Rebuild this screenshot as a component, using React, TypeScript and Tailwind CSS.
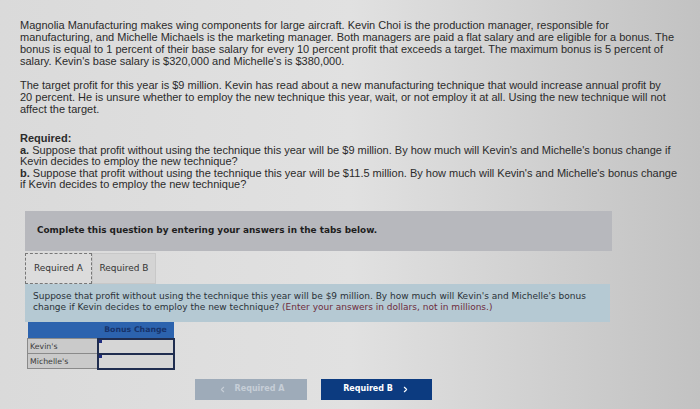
import { ChevronLeft, ChevronRight } from 'lucide-react'

const rows = ["Kevin's", "Michelle's"]

const intro = [
  'Magnolia Manufacturing makes wing components for large aircraft. Kevin Choi is the production manager, responsible for',
  'manufacturing, and Michelle Michaels is the marketing manager. Both managers are paid a flat salary and are eligible for a bonus. The',
  'bonus is equal to 1 percent of their base salary for every 10 percent profit that exceeds a target. The maximum bonus is 5 percent of',
  "salary. Kevin's base salary is $320,000 and Michelle's is $380,000.",
]

const target = [
  'The target profit for this year is $9 million. Kevin has read about a new manufacturing technique that would increase annual profit by',
  '20 percent. He is unsure whether to employ the new technique this year, wait, or not employ it at all. Using the new technique will not',
  'affect the target.',
]

export default function App() {
  return (
    <div className="h-[409px] w-[700px] overflow-hidden bg-linear-to-r from-[#dadada] via-[#e1e1e1] to-[#c2c2c2] text-[#2b2b2b]">
      {/* Question text */}
      <div className="pl-[20px] pt-[19px] font-['Liberation_Sans',Arial,sans-serif] text-[11px] leading-[12px] whitespace-nowrap">
        <div>
          {intro.map(l => <div key={l}>{l}</div>)}
        </div>
        <div className="mt-[12px]">
          {target.map(l => <div key={l}>{l}</div>)}
        </div>
        <div className="mt-[18px] leading-[11.6px]">
          <div className="font-bold">Required:</div>
          <div>
            <span className="font-bold">a.</span> Suppose that profit without using the technique this year will be $9 million. By how much will Kevin's and Michelle's bonus change if
          </div>
          <div>Kevin decides to employ the new technique?</div>
          <div>
            <span className="font-bold">b.</span> Suppose that profit without using the technique this year will be $11.5 million. By how much will Kevin's and Michelle's bonus change
          </div>
          <div>if Kevin decides to employ the new technique?</div>
        </div>
      </div>

      {/* Answer area */}
      <div className="ml-[25px] mt-[20px] w-[587px] font-['DejaVu_Sans',Verdana,sans-serif]">
        <div className="flex h-[40px] items-center bg-[#b7b8bd] pl-[12px] text-[8.9px] font-bold text-[#1e1e1e]">
          Complete this question by entering your answers in the tabs below.
        </div>

        <div className="flex h-[33px] pt-[2px]">
          <div className="flex w-[67px] items-center justify-center border border-dashed border-[#777] bg-[#dcdcdc] text-[9px] text-[#333]">
            Required A
          </div>
          <div className="flex w-[64px] items-center justify-center border border-[#c8c8c8] bg-[#d4d4d4] text-[9px] text-[#333]">
            Required B
          </div>
        </div>

        <div className="h-[38px] w-[585px] whitespace-nowrap bg-[#b5c9d3] px-[8px] pt-[7px] text-[9px] leading-[11px] text-[#2a3138]">
          <div>Suppose that profit without using the technique this year will be $9 million. By how much will Kevin's and Michelle's bonus</div>
          <div>
            change if Kevin decides to employ the new technique? <span className="text-[#6e2c3c]">(Enter your answers in dollars, not in millions.)</span>
          </div>
        </div>

        <table className="ml-[2px] border-collapse text-[7.8px]">
          <thead>
            <tr className="h-[17px] bg-[#2c63ae]">
              <th className="w-[70px]" />
              <th className="w-[76px] text-center font-bold text-[#17336b]">Bonus Change</th>
            </tr>
          </thead>
          <tbody>
            {rows.map(r => (
              <tr key={r} className="h-[15px]">
                <td className="border border-[#8a8a8a] bg-[#cacaca] pl-[2px] text-[#3a3a3a]">{r}</td>
                <td className="relative border-2 border-[#1f2d4f] bg-[#d6d6d6]">
                  <span className="absolute left-0 top-0 h-0 w-0 border-l-[3px] border-t-[3px] border-l-[#1f2d80] border-t-[#1f2d80] border-r-transparent border-b-transparent" />
                </td>
              </tr>
            ))}
          </tbody>
        </table>

        <div className="mt-[9px] flex gap-[14px] pl-[170px]">
          <div className="flex h-[21px] w-[112px] items-center justify-center gap-[8px] bg-[#9eabb9] text-[8px] font-bold text-[#c6ced7]">
            <ChevronLeft size={9} strokeWidth={3} />
            Required A
          </div>
          <div className="flex h-[21px] w-[111px] items-center justify-center gap-[8px] bg-[#0c3b80] text-[8px] font-bold text-white">
            Required B
            <ChevronRight size={9} strokeWidth={3} />
          </div>
        </div>
      </div>
    </div>
  )
}
